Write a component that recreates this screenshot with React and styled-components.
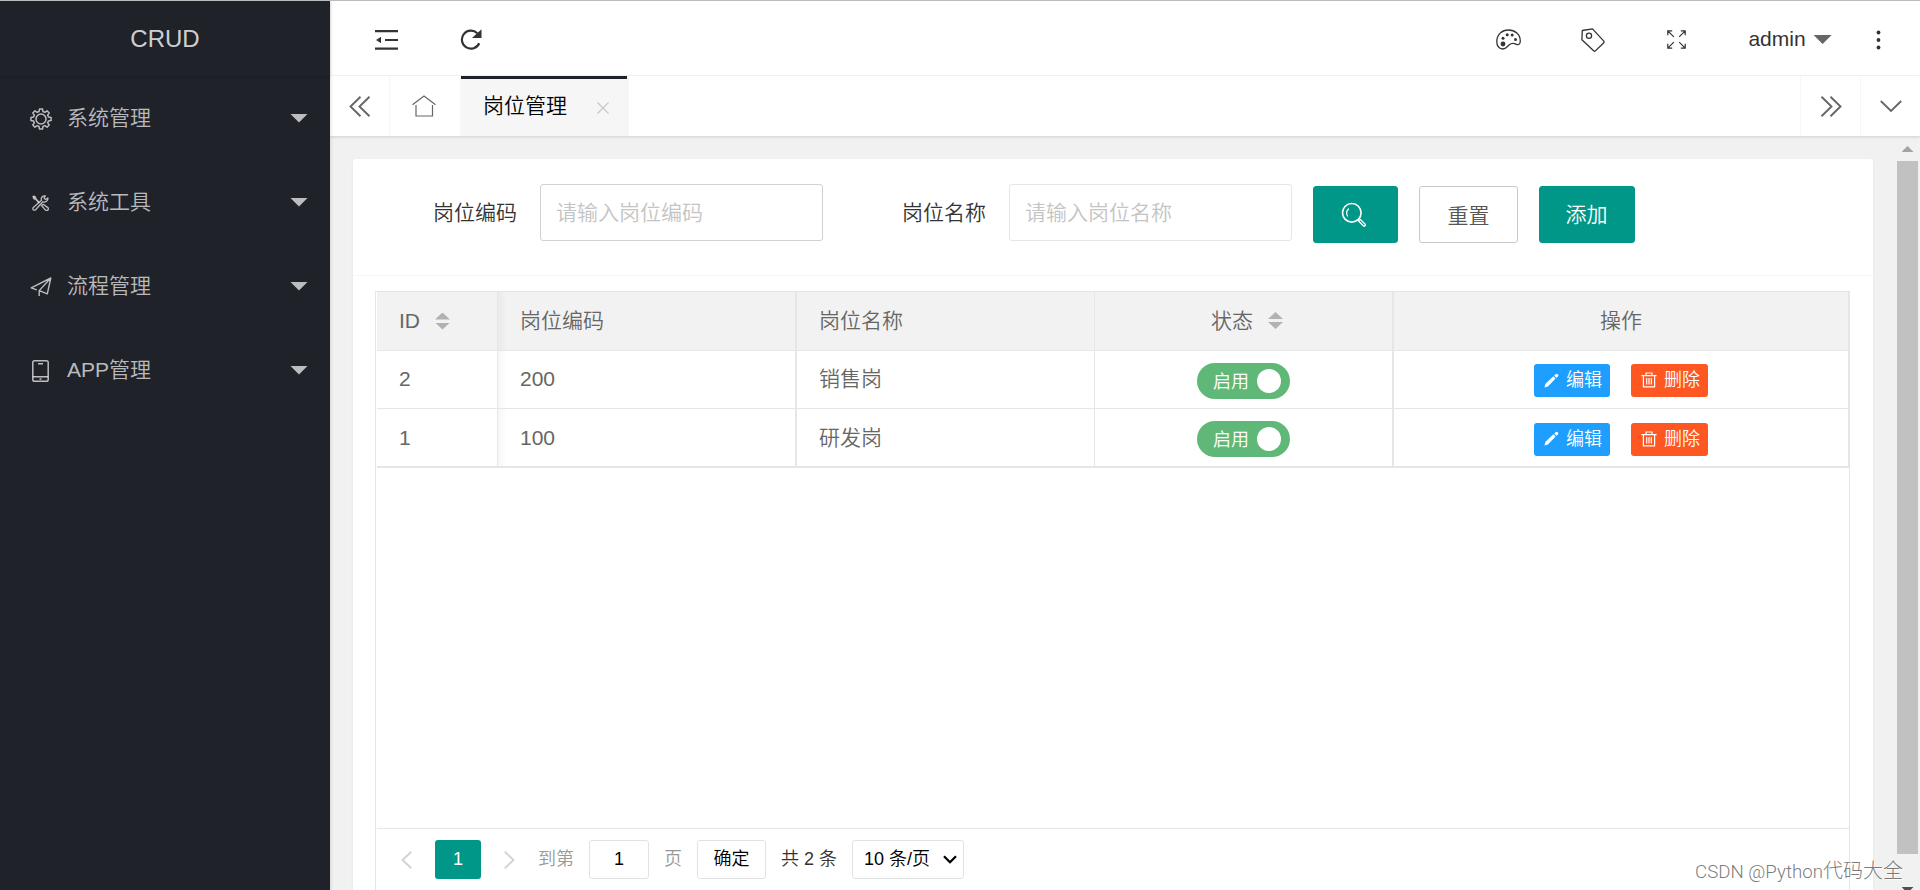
import React from "react";
import styled, { createGlobalStyle, css } from "styled-components";

const Global = createGlobalStyle`
  *, *::before, *::after { box-sizing: border-box; }
  html, body { margin: 0; padding: 0; height: 890px; overflow: hidden; }
  body, input, button {
    font-family: "Liberation Sans", "Noto Sans CJK SC", sans-serif;
    font-size: 21px;
    font-weight: 350;
    line-height: 36px;
    color: #333;
  }
  svg { display: block; flex: none; }
`;

const Shell = styled.div`
  display: flex;
  width: 1920px;
  height: 890px;
  overflow: hidden;
  border-top: 1px solid #bbb;
  background: #f1f1f1;
`;

/* ---------- sidebar ---------- */
const Sidebar = styled.aside`
  position: relative;
  z-index: 2;
  flex: none;
  width: 330px;
  background: #20222a;
  color: rgba(255, 255, 255, 0.7);
  box-shadow: 1px 0 3px rgba(0, 0, 0, 0.12);
`;
const Logo = styled.div`
  height: 75px;
  line-height: 75px;
  text-align: center;
  font-size: 24px;
  font-weight: 400;
  color: rgba(255, 255, 255, 0.8);
  box-shadow: 0 1px 2px rgba(0, 0, 0, 0.15);
`;
const Nav = styled.nav``;
const NavItem = styled.a`
  display: flex;
  align-items: center;
  height: 84px;
  padding: 0 22px 0 28px;
`;
const NavIcon = styled.span`
  display: flex;
  justify-content: center;
  width: 25px;
  margin-right: 14px;
  padding-top: 2px;
`;
const NavLabel = styled.span`
  flex: 1;
`;
const Caret = styled.i`
  flex: none;
  width: 18px;
  height: 9px;
  background: ${(p) => p.$color};
  clip-path: polygon(0 0, 100% 0, 50% 100%);
`;

/* ---------- header and tabs ---------- */
const Main = styled.div`
  flex: 1;
  min-width: 0;
  display: flex;
  flex-direction: column;
`;
const Header = styled.header`
  flex: none;
  display: flex;
  justify-content: space-between;
  height: 75px;
  padding: 0 25px 0 14px;
  background: #fff;
  border-bottom: 1px solid #f6f6f6;
`;
const HeaderGroup = styled.div`
  display: flex;
`;
const HeaderItem = styled.div`
  display: flex;
  align-items: center;
  justify-content: center;
  gap: ${(p) => p.$gap || 0}px;
  width: ${(p) => p.$w || 84}px;
  padding-top: 3px;
  padding-left: ${(p) => p.$pl || 0}px;
`;
const UserName = styled.span`
  font-weight: 400;
  line-height: 30px;
  padding-bottom: 2px;
`;
const TabBar = styled.div`
  position: relative;
  z-index: 1;
  flex: none;
  display: flex;
  height: 60px;
  background: #fff;
  color: #666;
  box-shadow: 0 1px 3px rgba(0, 0, 0, 0.14);
`;
const TabControl = styled.div`
  display: flex;
  align-items: center;
  justify-content: center;
  width: 60px;
  ${(p) =>
    p.$side === "right"
      ? css`border-left: 1px solid #f6f6f6;`
      : css`border-right: 1px solid #f6f6f6;`}
`;
const HomeTab = styled.div`
  display: flex;
  align-items: center;
  justify-content: center;
  width: 70px;
  padding-right: 2px;
`;
const Tab = styled.div`
  display: flex;
  align-items: center;
  width: 169px;
  padding-left: 23px;
  background: linear-gradient(#20222a, #20222a) 1px 0 / 166px 3px no-repeat #f6f6f6;
  color: #000;
`;
const TabLabel = styled.span`
  width: 114px;
`;
const TabClose = styled.span`
  padding-top: 4px;
  color: #c8c8c8;
`;
const Spacer = styled.div`
  flex: 1;
`;

/* ---------- page body ---------- */
const Body = styled.div`
  flex: 1;
  min-height: 0;
  display: flex;
  justify-content: space-between;
  padding-left: 23px;
`;
const Card = styled.section`
  display: flex;
  flex-direction: column;
  width: 1520px;
  margin-top: 23px;
  background: #fff;
  border-radius: 3px 3px 0 0;
  box-shadow: 0 1px 3px rgba(0, 0, 0, 0.06);
`;
const ScrollTrack = styled.div`
  display: flex;
  flex-direction: column;
  align-items: center;
  width: 25px;
  padding: 10px 1px 0 1px;
`;
const ScrollArrow = styled.i`
  flex: none;
  width: 12px;
  height: 6px;
  background: ${(p) => (p.$down ? "#505050" : "#a3a3a3")};
  clip-path: ${(p) =>
    p.$down ? "polygon(0 0, 100% 0, 50% 100%)" : "polygon(50% 0, 100% 100%, 0 100%)"};
`;
const ScrollThumb = styled.div`
  flex: none;
  width: 21px;
  height: 693px;
  margin: 9px 0 33px;
  background: #c1c1c1;
`;

/* ---------- search form ---------- */
const SearchForm = styled.form`
  flex: none;
  display: flex;
  align-items: flex-start;
  height: 117px;
  padding: 25px 0 0 80px;
  border-bottom: 1px solid #f6f6f6;
`;
const Field = styled.label`
  display: flex;
  align-items: center;
  margin-right: ${(p) => p.$after}px;
`;
const FieldLabel = styled.span`
  width: 107px;
`;
const Input = styled.input`
  width: 283px;
  height: 57px;
  padding: 0 0 0 15px;
  border: 1px solid ${(p) => (p.$active ? "#d2d2d2" : "#e6e6e6")};
  border-radius: 3px;
  outline: none;
  &::placeholder { color: #c4c4c4; opacity: 1; }
`;
const Button = styled.button`
  display: flex;
  align-items: center;
  justify-content: center;
  width: ${(p) => p.$w}px;
  height: 57px;
  margin: 2px 21px 0 0;
  padding: ${(p) => (p.$plain ? 3 : 0)}px ${(p) => p.$shift || 0}px 0 0;
  border: 1px solid ${(p) => (p.$plain ? "#c9c9c9" : "#009688")};
  border-radius: 3px;
  background: ${(p) => (p.$plain ? "#fff" : "#009688")};
  color: ${(p) => (p.$plain ? "#555" : "#fff")};
`;

/* ---------- table ---------- */
const TableBox = styled.div`
  flex: 1;
  min-height: 0;
  display: flex;
  flex-direction: column;
  margin: 15px 23px 0 22px;
  border: solid #e6e6e6;
  border-width: 1px 1px 0;
  padding-left: 1px;
`;
const Row = styled.div`
  flex: none;
  display: grid;
  grid-template-columns: 121px 299px 298px 299px 455px;
  height: ${(p) => p.$h}px;
  line-height: ${(p) => p.$h - 2}px;
  border-bottom: ${(p) => (p.$last ? 2 : 1)}px solid #e6e6e6;
  background: ${(p) => (p.$head ? "#f2f2f2" : "#fff")};
  color: #666;
`;
const Cell = styled.div`
  display: flex;
  align-items: ${(p) => (p.$center ? "center" : "flex-start")};
  justify-content: ${(p) => (p.$center ? "center" : "flex-start")};
  padding-left: ${(p) => (p.$center ? p.$pad || 0 : 22)}px;
  padding-bottom: ${(p) => p.$pb || 0}px;
  border-right: ${(p) => p.$line || 1}px solid #e6e6e6;
  ${(p) =>
    p.$shaded &&
    css`background: linear-gradient(90deg, rgba(0, 0, 0, 0.035), rgba(0, 0, 0, 0) 9px);`}
`;
const SortMark = styled.span`
  display: flex;
  flex-direction: column;
  align-self: center;
  gap: 3px;
  margin-left: 15px;
`;
const SortArrow = styled.i`
  width: 15px;
  height: 7px;
  background: #b2b2b2;
  clip-path: ${(p) =>
    p.$down ? "polygon(0 0, 100% 0, 50% 100%)" : "polygon(50% 0, 100% 100%, 0 100%)"};
`;
const Switch = styled.span`
  display: flex;
  align-items: center;
  justify-content: space-between;
  width: 93px;
  height: 36px;
  margin-top: 3px;
  padding: 2px 9px 0 16px;
  border-radius: 18px;
  background: #5fb878;
  color: #fff;
  font-size: 18px;
  line-height: 34px;
`;
const Knob = styled.i`
  width: 24px;
  height: 24px;
  margin-bottom: 2px;
  border-radius: 50%;
  background: #fff;
`;
const SmallButton = styled.button`
  display: flex;
  align-items: center;
  gap: ${(p) => p.$gap || 7}px;
  width: ${(p) => p.$w}px;
  height: 33px;
  margin-left: ${(p) => p.$ml || 0}px;
  margin-top: ${(p) => p.$mt}px;
  padding: 0 0 1px 10px;
  border: 0;
  border-radius: 3px;
  background: ${(p) => p.$bg};
  color: #fff;
  font-size: 18px;
  line-height: 32px;
  white-space: nowrap;
`;

/* ---------- pagination ---------- */
const Pager = styled.div`
  flex: none;
  display: flex;
  align-items: center;
  height: 62px;
  margin-top: auto;
  padding-left: 21px;
  border-top: 1px solid #e6e6e6;
  font-size: 18px;
`;
const PageStep = styled.span`
  display: flex;
  justify-content: center;
  width: ${(p) => p.$w}px;
`;
const PageNumber = styled.span`
  width: 46px;
  height: 39px;
  line-height: 38px;
  border-radius: 3px;
  background: #009688;
  color: #fff;
  text-align: center;
`;
const PageText = styled.span`
  width: ${(p) => p.$w}px;
  padding-bottom: 2px;
  color: ${(p) => (p.$dark ? "#333" : "#999")};
`;
const PageBox = styled.span`
  display: flex;
  align-items: center;
  justify-content: ${(p) => (p.$spread ? "space-between" : "center")};
  width: ${(p) => p.$w}px;
  height: 39px;
  margin-right: 15px;
  padding: ${(p) => (p.$spread ? "0 6px 1px 11px" : "0 0 1px")};
  border: 1px solid #e2e2e2;
  border-radius: 3px;
  color: #000;
`;

const Watermark = styled.div`
  position: absolute;
  left: 1695px;
  top: 853px;
  z-index: 5;
  font-family: Roboto, "Noto Sans CJK SC", sans-serif;
  font-size: 18.7px;
  font-weight: 300;
  white-space: nowrap;
  color: rgba(115, 115, 115, 0.95);
  text-shadow: 1px 1px 1px #fff;
`;
const WatermarkName = styled.span`
  font-size: 20px;
`;

/* ---------- icons ---------- */
const Line = ({ w, h, box, sw = 1.5, children, ...rest }) => (
  <svg width={w} height={h} viewBox={box || `0 0 ${w} ${h}`} fill="none" stroke="currentColor" strokeWidth={sw} {...rest}>
    {children}
  </svg>
);

const gearPath = (() => {
  const pts = [];
  for (let i = 0; i < 8; i++) {
    [[-0.26, 7.7], [-0.15, 10.2], [0.15, 10.2], [0.26, 7.7]].forEach(([d, r]) => {
      const a = (i * Math.PI) / 4 + d;
      pts.push(`${(11 + r * Math.sin(a)).toFixed(2)} ${(11 - r * Math.cos(a)).toFixed(2)}`);
    });
  }
  return `M${pts.join("L")}Z`;
})();

const GearIcon = () => (
  <Line w={22} h={22} sw={1.5} strokeLinejoin="round">
    <path d={gearPath} />
    <circle cx="11" cy="11" r="5" />
  </Line>
);
const ToolsIcon = () => (
  <Line w={17} h={16} sw={1.3} strokeLinejoin="round">
    <path d="M.5 1.500L2 .6 4 2l.2 1.600L7.800 7.200 6.800 8.200 3.200 4.500 1.600 4.200Z" fill="currentColor" strokeWidth="0.400" />
    <path d="M9.500 10.500L11.200 9.300 15.800 12.600a1.500 1.500 0 0 1-2.300 2.500z" />
    <path d="M13.400.9C10.500.5 8.600 2.700 9.500 5.300L1.300 12.400a1.500 1.500 0 0 0 2.300 2.300L10.800 6.800C13.500 7.700 16.300 5.800 15.900 2.900L13.600 4.600 12 3z" />
  </Line>
);
const PlaneIcon = () => (
  <Line w={22} h={20} sw={1.4} strokeLinejoin="round">
    <path d="M6.800 12.800L1.200 10.800 20.800 1 17.300 16.800 9.200 13.600 20.800 1M9.200 13.600V19" />
  </Line>
);
const PhoneIcon = () => (
  <Line w={17} h={22} sw={1.5}>
    <rect x="0.800" y="0.800" width="15.400" height="20.400" rx="1.800" />
    <path d="M.8 16.700h15.400M6 3.700h5M7.500 19h2" />
  </Line>
);
const ShrinkIcon = () => (
  <Line w={23} h={20} sw={2.200}>
    <path d="M0 1.200h23M10 10h13M0 18.600h23" />
    <path d="M1 10l5-3.200v6.400z" fill="currentColor" stroke="none" />
  </Line>
);
const RefreshIcon = () => (
  <Line w={22} h={21} sw={2.2}>
    <path d="M19.200 14.200A9 9 0 1 1 17.300 4.300" />
    <path d="M21.500 0.300V9H12z" fill="currentColor" stroke="none" />
  </Line>
);
const PaletteIcon = () => (
  <Line w={25} h={21} sw={1.3}>
    <path d="M6.500 20C2.500 19.500.8 16 .8 12.500.8 5.500 6 1 12.500 1S24.300 5.500 24.300 12c0 3.500-1.800 4.300-4 3.300-2.500-1.200-5.300-1-7.300.7C11 17.800 9.500 20.200 6.500 20z" />
    <g fill="currentColor" stroke="none">
      <circle cx="7" cy="15" r="2.400" />
      <circle cx="7" cy="9.200" r="1.500" />
      <circle cx="11.200" cy="5.800" r="1.500" />
      <circle cx="16.200" cy="6" r="1.500" />
      <circle cx="19.500" cy="10.500" r="1.500" />
    </g>
  </Line>
);
const TagIcon = () => (
  <Line w={24} h={24} sw={1.3} strokeLinejoin="round">
    <path d="M1.300 2.500L11.500.9l11.300 12.200c.5.600.5 1.100 0 1.600l-8.400 8.200c-.5.500-1 .5-1.500 0L.9 11.800z" />
    <circle cx="8" cy="7.700" r="2.600" />
  </Line>
);
const FullscreenIcon = () => (
  <Line w={19} h={19} sw={1.2}>
    <path d="M.8 5.200V.8h4.400M.8.8l6 6M13.800.8h4.400v4.400M18.200.8l-6 6M.8 13.800v4.400h4.400M.8 18.200l6-6M13.800 18.200h4.400v-4.400M18.200 18.200l-6-6" />
  </Line>
);
const DotsIcon = () => (
  <svg width="5" height="20" viewBox="0 0 5 20" fill="currentColor">
    <circle cx="2.500" cy="2.500" r="1.900" />
    <circle cx="2.500" cy="10" r="1.900" />
    <circle cx="2.500" cy="17.500" r="1.900" />
  </svg>
);
const DoubleChevron = ({ right }) => (
  <Line w={22} h={21} sw={1.9} transform={right ? "scale(-1 1)" : undefined}>
    <path d="M11.500 .8L1.500 10.500 11.500 20.200M20.500 .8L10.500 10.500 20.500 20.200" />
  </Line>
);
const DownIcon = () => (
  <Line w={22} h={12} sw={1.8}>
    <path d="M.8 1L11 11 21.200 1" />
  </Line>
);
const HomeIcon = () => (
  <Line w={24} h={22} sw={1.2}>
    <path d="M.5 9.700L12 1l11.500 8.700M4 10v11h16.500V10" />
  </Line>
);
const CloseIcon = () => (
  <Line w={12} h={12} sw={1.3}>
    <path d="M.5.5l11 11M11.500.5l-11 11" />
  </Line>
);
const SearchIcon = () => (
  <Line w={26} h={26} sw={1.6} strokeLinecap="round">
    <circle cx="10.800" cy="10.800" r="9.300" />
    <path d="M6.500 14c-1.300-2.300-.8-5.300 1-7" strokeWidth="1.200" />
    <path d="M17.500 19l1.700-1.700 5 5c.8 1-.7 2.500-1.700 1.700z" strokeWidth="1.300" />
  </Line>
);
const PencilIcon = () => (
  <svg width="15" height="15" viewBox="0 0 15 15" fill="currentColor">
    <path d="M.4 14.600L1.500 10.800 9.400 3.300 11.600 5.500 3.900 13.400zM10.200 2.600L11.700 1.200a1.400 1.400 0 0 1 2 0l.2.200a1.400 1.400 0 0 1 0 2L12.400 4.800z" />
  </svg>
);
const TrashIcon = () => (
  <Line w={16} h={16} sw={1.2}>
    <path d="M.4 3.600h15.200M5 3.300V1h6v2.300M2.400 3.600v11.200h11.200V3.600M5.700 6v6.500M8 6v6.500M10.300 6v6.500" />
  </Line>
);
const StepIcon = ({ right }) => (
  <Line w={11} h={18} sw={1.9} transform={right ? "scale(-1 1)" : undefined} color="#d2d2d2">
    <path d="M10.300.7L1.500 9l8.800 8.300" />
  </Line>
);
const SelectIcon = () => (
  <Line w={14} h={9} sw={2.300}>
    <path d="M1 1.200l6 6 6-6" />
  </Line>
);

const menu = [
  { label: "系统管理", Icon: GearIcon },
  { label: "系统工具", Icon: ToolsIcon },
  { label: "流程管理", Icon: PlaneIcon },
  { label: "APP管理", Icon: PhoneIcon },
];

const posts = [
  { id: 2, code: "200", name: "销售岗" },
  { id: 1, code: "100", name: "研发岗" },
];

const Sort = () => (
  <SortMark>
    <SortArrow />
    <SortArrow $down />
  </SortMark>
);

export default function App() {
  return (
    <>
      <Global />
      <Shell>
        <Sidebar>
          <Logo>CRUD</Logo>
          <Nav>
            {menu.map(({ label, Icon }) => (
              <NavItem key={label}>
                <NavIcon><Icon /></NavIcon>
                <NavLabel>{label}</NavLabel>
                <Caret $color="#bcbdbf" />
              </NavItem>
            ))}
          </Nav>
        </Sidebar>

        <Main>
          <Header>
            <HeaderGroup>
              <HeaderItem><ShrinkIcon /></HeaderItem>
              <HeaderItem $pl={2}><RefreshIcon /></HeaderItem>
            </HeaderGroup>
            <HeaderGroup>
              <HeaderItem><PaletteIcon /></HeaderItem>
              <HeaderItem $pl={2}><TagIcon /></HeaderItem>
              <HeaderItem><FullscreenIcon /></HeaderItem>
              <HeaderItem $w={143} $gap={8} $pl={1}>
                <UserName>admin</UserName>
                <Caret $color="#666" />
              </HeaderItem>
              <HeaderItem $w={34}><DotsIcon /></HeaderItem>
            </HeaderGroup>
          </Header>

          <TabBar>
            <TabControl><DoubleChevron /></TabControl>
            <HomeTab><HomeIcon /></HomeTab>
            <Tab>
              <TabLabel>岗位管理</TabLabel>
              <TabClose><CloseIcon /></TabClose>
            </Tab>
            <Spacer />
            <TabControl $side="right"><DoubleChevron right /></TabControl>
            <TabControl $side="right"><DownIcon /></TabControl>
          </TabBar>

          <Body>
            <Card>
              <SearchForm>
                <Field $after={79}>
                  <FieldLabel>岗位编码</FieldLabel>
                  <Input $active placeholder="请输入岗位编码" />
                </Field>
                <Field $after={21}>
                  <FieldLabel>岗位名称</FieldLabel>
                  <Input placeholder="请输入岗位名称" />
                </Field>
                <Button type="button" $w={85} $shift={4}><SearchIcon /></Button>
                <Button type="button" $w={99} $plain>重置</Button>
                <Button type="button" $w={96} $shift={1}>添加</Button>
              </SearchForm>

              <TableBox>
                <Row $head $h={59}>
                  <Cell>ID<Sort /></Cell>
                  <Cell $shaded $line={2}>岗位编码</Cell>
                  <Cell>岗位名称</Cell>
                  <Cell $center $pad={7} $pb={1} $line={2}>状态<Sort /></Cell>
                  <Cell $center $pb={1}>操作</Cell>
                </Row>
                {posts.map((post, i) => (
                  <Row key={post.id} $h={i ? 59 : 58} $last={i === 1}>
                    <Cell>{post.id}</Cell>
                    <Cell $shaded $line={2}>{post.code}</Cell>
                    <Cell>{post.name}</Cell>
                    <Cell $center $line={2}>
                      <Switch>启用<Knob /></Switch>
                    </Cell>
                    <Cell $center>
                      <SmallButton $w={76} $mt={2 + i} $bg="#1e9fff"><PencilIcon />编辑</SmallButton>
                      <SmallButton $w={77} $mt={2 + i} $ml={21} $bg="#ff5722"><TrashIcon />删除</SmallButton>
                    </Cell>
                  </Row>
                ))}
                <Pager>
                  <PageStep $w={16}><StepIcon /></PageStep>
                  <PageStep $w={21} />
                  <PageNumber>1</PageNumber>
                  <PageStep $w={57}><StepIcon right /></PageStep>
                  <PageText $w={51}>到第</PageText>
                  <PageBox $w={60}>1</PageBox>
                  <PageText $w={33}>页</PageText>
                  <PageBox $w={69}>确定</PageBox>
                  <PageText $w={71} $dark>共 2 条</PageText>
                  <PageBox $w={112} $spread>10 条/页<SelectIcon /></PageBox>
                </Pager>
              </TableBox>
            </Card>
            <ScrollTrack>
              <ScrollArrow />
              <ScrollThumb />
              <ScrollArrow $down />
            </ScrollTrack>
          </Body>
        </Main>
      </Shell>
      <Watermark>CSDN @Python<WatermarkName>代码大全</WatermarkName></Watermark>
    </>
  );
}
